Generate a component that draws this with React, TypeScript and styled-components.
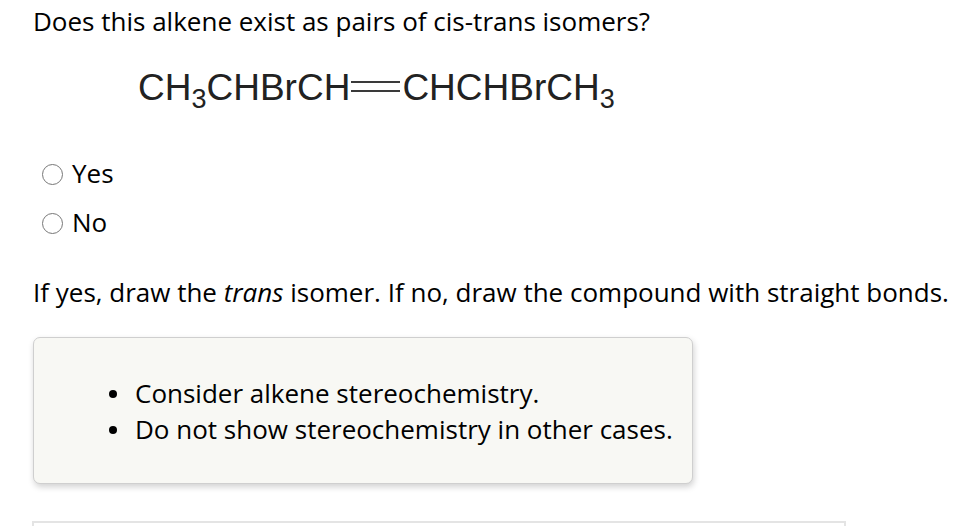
import React from 'react'
import styled, { createGlobalStyle } from 'styled-components'

const GlobalStyle = createGlobalStyle`
  html, body {
    margin: 0;
    padding: 0;
    background: #ffffff;
  }
  body {
    font-family: "Open Sans", "Noto Sans", sans-serif;
    color: #000000;
  }
`

const Page = styled.div`
  width: 978px;
  height: 526px;
  overflow: hidden;
  padding: 3px 0 0 33px;
  box-sizing: border-box;
`

const Question = styled.p`
  margin: 0;
  font-size: 26px;
  line-height: 36px;
`

const Formula = styled.div`
  display: flex;
  align-items: baseline;
  height: 40px;
  margin: 29px 0 0 105px;
  font-family: "Liberation Sans", Arial, sans-serif;
  font-size: 37px;
  line-height: 40px;
  color: #222222;
`

const Sub = styled.span`
  font-size: 27px;
  position: relative;
  top: 8px;
`

const DoubleBond = styled.span`
  display: inline-flex;
  flex-direction: column;
  justify-content: space-between;
  align-self: center;
  width: 49px;
  height: 11px;
  margin: 0 2px 3px 1px;

  &::before,
  &::after {
    content: '';
    display: block;
    height: 2px;
    background: #3a3a3a;
  }
`

const Options = styled.div`
  display: flex;
  flex-direction: column;
  gap: 13px;
  margin: 47px 0 0 9px;
`

const Option = styled.label`
  display: flex;
  align-items: center;
  gap: 9px;
  font-size: 26px;
  line-height: 36px;
`

const Radio = styled.span`
  width: 21px;
  height: 21px;
  margin-top: 2px;
  border: 1.5px solid #777777;
  border-radius: 50%;
  box-sizing: border-box;
  background: #ffffff;
`

const Instruction = styled.p`
  margin: 34px 0 0 0;
  font-size: 26px;
  line-height: 36px;

  em {
    font-style: italic;
  }
`

const HintBox = styled.div`
  width: 660px;
  height: 147px;
  margin-top: 27px;
  box-sizing: border-box;
  background: #f8f8f4;
  border: 1px solid #cfcfcf;
  border-radius: 7px;
  box-shadow: 1px 3px 6px rgba(0, 0, 0, 0.18);
  display: flex;
  align-items: center;
`

const HintList = styled.ul`
  margin: 0;
  padding: 0 0 0 75px;
  list-style: none;
  font-size: 26px;
  line-height: 36px;
`

const HintItem = styled.li`
  display: flex;
  align-items: center;
  gap: 18px;

  &::before {
    content: '';
    width: 8px;
    height: 8px;
    border-radius: 50%;
    background: #000000;
    flex-shrink: 0;
    margin-top: 2px;
  }
`

const DrawArea = styled.div`
  width: 814px;
  height: 40px;
  margin-top: 37px;
  box-sizing: border-box;
  border: 2px solid #e4e4e4;
  border-bottom: none;
  margin-left: -1px;
`

export default function App() {
  return (
    <>
      <GlobalStyle />
      <Page>
        <Question>Does this alkene exist as pairs of cis-trans isomers?</Question>
        <Formula>
          CH<Sub>3</Sub>CHBrCH
          <DoubleBond />
          CHCHBrCH<Sub>3</Sub>
        </Formula>
        <Options>
          <Option>
            <Radio />
            Yes
          </Option>
          <Option>
            <Radio />
            No
          </Option>
        </Options>
        <Instruction>
          If yes, draw the <em>trans</em> isomer. If no, draw the compound with straight bonds.
        </Instruction>
        <HintBox>
          <HintList>
            <HintItem>Consider alkene stereochemistry.</HintItem>
            <HintItem>Do not show stereochemistry in other cases.</HintItem>
          </HintList>
        </HintBox>
        <DrawArea />
      </Page>
    </>
  )
}
